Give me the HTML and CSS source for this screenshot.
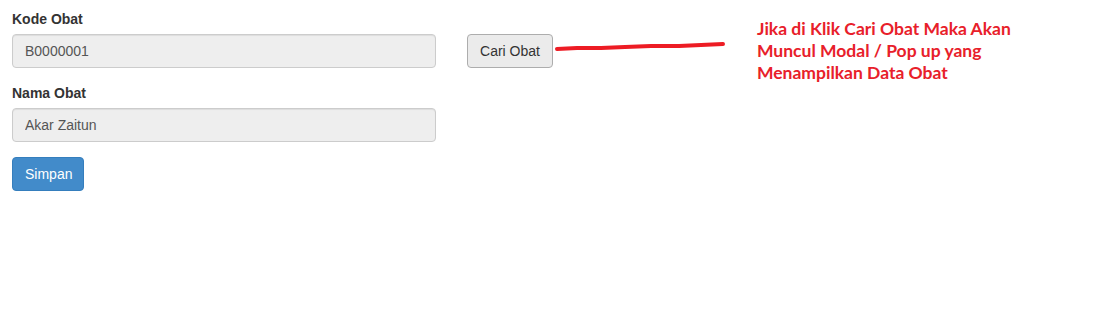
FILE: index.html
```html
<!DOCTYPE html>
<html lang="en">
<head>
  <meta charset="UTF-8">
  <title>Data Obat</title>
  <link rel="stylesheet" href="styles.css">
</head>
<body>
  <div class="page">
    <form class="form-obat">
      <div class="form-group">
        <label for="kode">Kode Obat</label>
        <input type="text" id="kode" class="form-control" value="B0000001" readonly>
      </div>
      <div class="form-group">
        <label for="nama">Nama Obat</label>
        <input type="text" id="nama" class="form-control" value="Akar Zaitun" readonly>
      </div>
      <button type="button" class="btn btn-primary">Simpan</button>
    </form>

    <div class="cari-col">
      <button type="button" class="btn btn-default">Cari Obat</button>
    </div>

    <svg class="note-line" width="172" height="12" viewBox="0 0 172 12">
      <polyline points="2,9 22,8 46,8 70,7 96,6 124,6 146,5 168,4" fill="none" stroke="#ed1c24" stroke-width="4" stroke-linecap="round"/>
    </svg>

    <p class="note">Jika di Klik Cari Obat Maka Akan<br>Muncul Modal / Pop up yang<br>Menampilkan Data Obat</p>
  </div>
</body>
</html>
```

FILE: styles.css
```css
body {
  margin: 0;
  font-family: "Liberation Sans", Arial, sans-serif;
  font-size: 14px;
  line-height: 20px;
  color: #333;
  background: #fff;
}

.page {
  display: flex;
  align-items: flex-start;
  padding: 9px 12px;
}

.form-obat {
  width: 424px;
}

.form-group {
  margin-bottom: 15px;
}

label {
  display: block;
  font-weight: bold;
  margin-bottom: 5px;
}

.form-control {
  display: block;
  box-sizing: border-box;
  width: 100%;
  height: 34px;
  padding: 6px 12px;
  font-family: inherit;
  font-size: 14px;
  color: #555;
  background-color: #eee;
  border: 1px solid #ccc;
  border-radius: 4px;
  box-shadow: inset 0 1px 1px rgba(0, 0, 0, 0.075);
}

.btn {
  display: inline-block;
  box-sizing: border-box;
  height: 34px;
  padding: 6px 12px;
  font-family: inherit;
  font-size: 14px;
  line-height: 20px;
  border: 1px solid transparent;
  border-radius: 4px;
  cursor: pointer;
}

.btn-primary {
  width: 72px;
  color: #fff;
  background-color: #428bca;
  border-color: #357ebd;
}

.btn-default {
  width: 86px;
  color: #333;
  background-color: #ebebeb;
  border-color: #adadad;
}

.cari-col {
  margin-left: 31px;
  margin-top: 25px;
}

.note-line {
  display: block;
  margin-left: 2px;
  margin-top: 31px;
}

.note {
  margin: 9px 0 0 30px;
  font-family: Lato, "Open Sans", sans-serif;
  font-weight: bold;
  font-size: 17.5px;
  line-height: 22px;
  color: #e8202a;
}
```
